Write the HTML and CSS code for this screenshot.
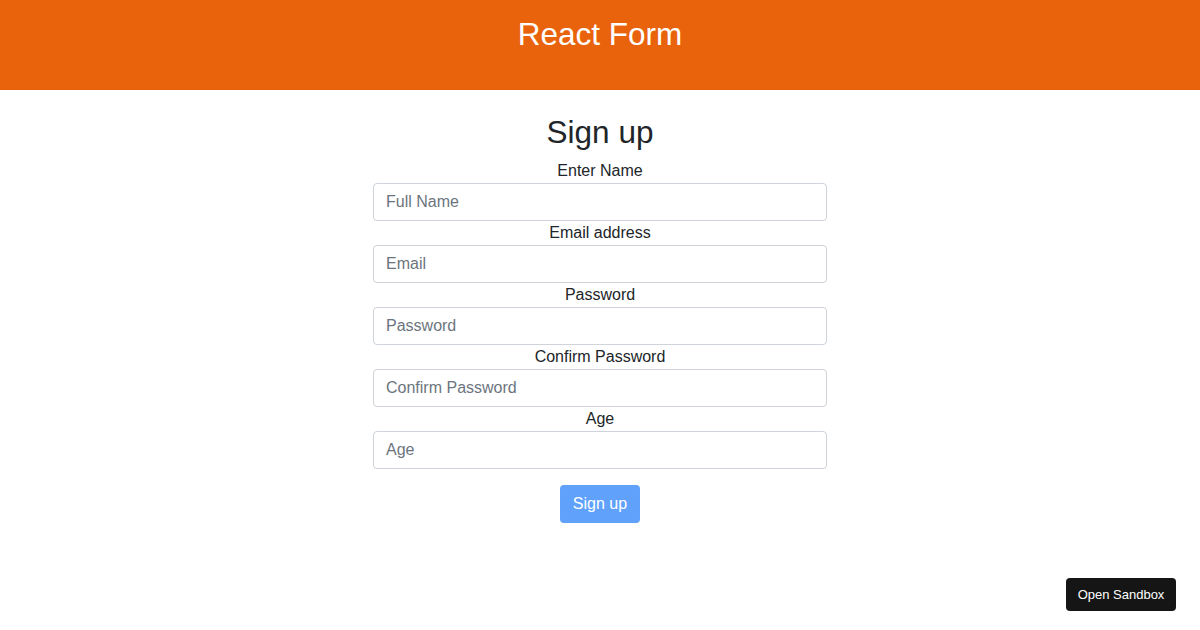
FILE: index.html
```html
<!DOCTYPE html>
<html lang="en">
<head>
<meta charset="utf-8">
<title>React Form</title>
<link rel="stylesheet" href="styles.css">
</head>
<body>
<header class="topbar">
  <h1 class="topbar-title">React Form</h1>
</header>
<main class="page">
  <form class="signup">
    <h2 class="signup-title">Sign up</h2>
    <label class="field-label" for="name">Enter Name</label>
    <input class="field-input" id="name" type="text" placeholder="Full Name">
    <label class="field-label" for="email">Email address</label>
    <input class="field-input" id="email" type="email" placeholder="Email">
    <label class="field-label" for="pw">Password</label>
    <input class="field-input" id="pw" type="password" placeholder="Password">
    <label class="field-label" for="cpw">Confirm Password</label>
    <input class="field-input" id="cpw" type="password" placeholder="Confirm Password">
    <label class="field-label" for="age">Age</label>
    <input class="field-input" id="age" type="number" placeholder="Age">
    <button class="submit-btn" type="button" disabled>Sign up</button>
  </form>
</main>
<a class="sandbox-btn" href="#">Open Sandbox</a>
</body>
</html>
```
FILE: styles.css
```css
* { box-sizing: border-box; }
html, body {
  margin: 0;
  padding: 0;
  background: #fff;
  font-family: "Liberation Sans", Arial, sans-serif;
  color: #212529;
  font-size: 16px;
  line-height: 1.5;
}
.topbar {
  height: 90px;
  background: #e9630c;
  padding-top: 15px;
}
.topbar-title {
  margin: 0;
  text-align: center;
  color: #fff;
  font-weight: 400;
  font-size: 31.5px;
  line-height: 38px;
}
.page {
  display: flex;
  justify-content: center;
  padding-top: 23px;
}
.signup {
  width: 454px;
  display: flex;
  flex-direction: column;
  align-items: stretch;
}
.signup-title {
  margin: 0 0 8px;
  text-align: center;
  font-weight: 400;
  font-size: 31.5px;
  line-height: 38px;
}
.field-label {
  display: block;
  text-align: center;
  height: 24px;
  line-height: 24px;
}
.field-input {
  display: block;
  width: 100%;
  height: 38px;
  padding: 6px 12px;
  font-family: inherit;
  font-size: 16px;
  color: #212529;
  background: #fff;
  border: 1px solid #ced4da;
  border-radius: 4px;
  margin: 0;
  outline: none;
}
.field-input::placeholder { color: #6c757d; }
.submit-btn {
  align-self: center;
  margin-top: 16px;
  width: 80px;
  height: 38px;
  border: none;
  border-radius: 4px;
  background: #60a2fb;
  color: #fff;
  font-family: inherit;
  font-size: 16px;
  padding: 0;
}
.sandbox-btn {
  position: fixed;
  right: 24px;
  bottom: 19px;
  width: 110px;
  height: 33px;
  line-height: 33px;
  text-align: center;
  background: #151515;
  color: #fff;
  border-radius: 4px;
  font-size: 13px;
  text-decoration: none;
}
```
